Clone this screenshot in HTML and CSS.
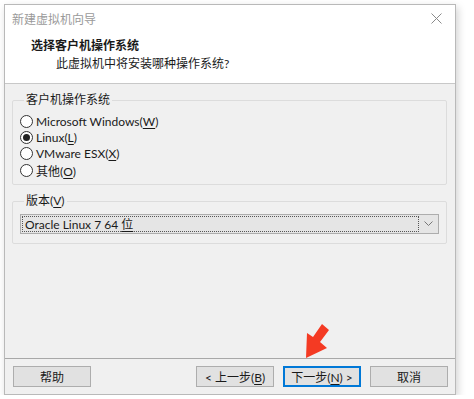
FILE: index.html
```html
<!DOCTYPE html>
<html lang="zh-CN">

<head>
  <meta charset="UTF-8" />
  <title>新建虚拟机向导</title>
  <link rel="stylesheet" href="styles.css">
</head>

<body>
  <div class="window">
    <!-- 标题和说明 -->
    <div class="header">
      <div class="titlebar">
        <span class="title">新建虚拟机向导</span>
        <span class="close">
          <svg width="11" height="11" viewBox="0 0 11 11"><path d="M0.5 0.5 L10.5 10.5 M10.5 0.5 L0.5 10.5" stroke="#8a8a8a" stroke-width="1" fill="none" /></svg>
        </span>
      </div>
      <h1>选择客户机操作系统</h1>
      <p class="sub">此虚拟机中将安装哪种操作系统?</p>
    </div>

    <div class="body">
      <fieldset class="group os">
        <legend>客户机操作系统</legend>
        <label class="radio"><span class="dot"></span><span>Microsoft Windows(<u>W</u>)</span></label>
        <label class="radio"><span class="dot on"></span><span>Linux(<u>L</u>)</span></label>
        <label class="radio"><span class="dot"></span><span>VMware ESX(<u>X</u>)</span></label>
        <label class="radio"><span class="dot"></span><span>其他(<u>O</u>)</span></label>
      </fieldset>

      <fieldset class="group ver">
        <legend>版本(<u>V</u>)</legend>
        <div class="select">
          <span class="value">Oracle Linux 7 64 <u>位</u></span>
          <span class="caret">
            <svg width="9" height="6" viewBox="0 0 9 6"><path d="M0.5 0.5 L4.5 4.5 L8.5 0.5" stroke="#777" stroke-width="1" fill="none" /></svg>
          </span>
        </div>
      </fieldset>
    </div>

    <div class="footer">
      <button class="btn">帮助</button>
      <span class="spacer"></span>
      <button class="btn">&lt; 上一步(<u>B</u>)</button>
      <button class="btn primary">下一步(<u>N</u>) &gt;</button>
      <button class="btn">取消</button>
      <!-- 红色提示箭头 -->
      <svg class="arrow" width="26" height="36" viewBox="0 0 26 36">
        <polygon points="1,35 2,10 8,14 17,1 24,7 15,19 22,25" fill="#f43a23" />
      </svg>
    </div>
  </div>
</body>

</html>
```

FILE: styles.css
```css
* {
  margin: 0;
  padding: 0;
  box-sizing: border-box;
}

body {
  background: #fff;
  padding: 4px 0 0 4px;
  font: 12px "Lato", "Noto Sans CJK SC", sans-serif;
  color: #1a1a1a;
}

u {
  text-decoration: underline;
  text-underline-offset: 2px;
}

.window {
  width: 452px;
  height: 391px;
  border: 1px solid #b9b9b9;
  background: #f0f0f0;
  box-shadow: 2px 3px 8px rgba(0, 0, 0, 0.18);
  display: flex;
  flex-direction: column;
}

.header {
  height: 79px;
  background: #fff;
  border-bottom: 1px solid #c8c8c8;
}

.titlebar {
  height: 27px;
  display: flex;
  align-items: center;
  justify-content: space-between;
  padding: 0 13px 0 7px;
}

.title {
  color: #9a9a9a;
  font-size: 12px;
}

.close {
  display: flex;
}

.header h1 {
  font-size: 12px;
  font-weight: bold;
  margin: 6px 0 0 26px;
  line-height: 16px;
}

.header .sub {
  margin: 1px 0 0 51px;
  line-height: 17px;
}

.body {
  flex: 1;
  padding: 8px 8px 0 7px;
  border-bottom: 1px solid #a8a8a8;
}

.group {
  border: 1px solid #dcdcdc;
  border-radius: 2px;
  padding: 0 7px 0 7px;
}

.group legend {
  padding: 0 2px;
  margin-left: 4px;
  line-height: 16px;
}

.os {
  height: 93px;
  padding-top: 5px;
}

.radio {
  display: flex;
  align-items: center;
  height: 16.4px;
  gap: 3px;
}

.dot {
  width: 13px;
  height: 13px;
  border: 1px solid #333;
  border-radius: 50%;
  background: #fff;
  display: flex;
  align-items: center;
  justify-content: center;
}

.dot.on::after {
  content: "";
  width: 7px;
  height: 7px;
  border-radius: 50%;
  background: #222;
}

.ver {
  margin-top: 8px;
  height: 51px;
  padding-top: 5px;
}

.select {
  height: 20px;
  border: 1px solid #adadad;
  background: #e5e5e5;
  display: flex;
  align-items: center;
  padding: 1px;
}

.select .value {
  flex: 1;
  height: 16px;
  border: 1px dotted #555;
  padding-left: 2px;
  line-height: 15px;
}

.select .caret {
  width: 18px;
  display: flex;
  justify-content: center;
}

.footer {
  height: 35px;
  display: flex;
  align-items: center;
  gap: 9px;
  padding: 0 7px 0 8px;
  position: relative;
}

.spacer {
  flex: 1;
}

.btn {
  width: 78px;
  height: 21px;
  border: 1px solid #adadad;
  background: #e1e1e1;
  font: inherit;
  color: #1a1a1a;
}

.btn.primary {
  border: 1px solid #0078d7;
  box-shadow: inset 0 0 0 1px #0078d7;
}

.arrow {
  position: absolute;
  left: 300px;
  top: -36px;
}
```
